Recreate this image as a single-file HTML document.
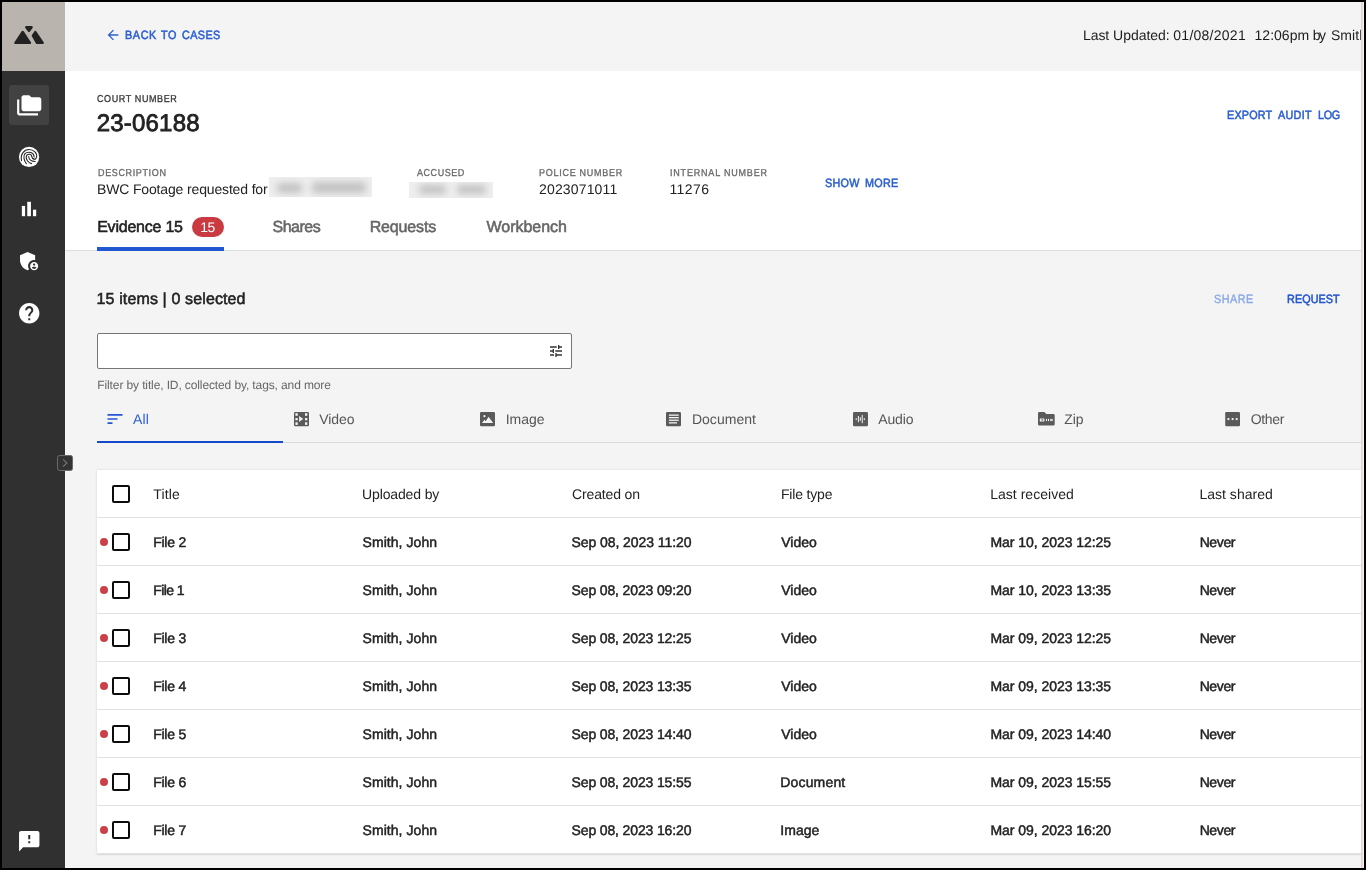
<!DOCTYPE html>
<html lang="en">
<head>
<meta charset="utf-8">
<title>Case 23-06188</title>
<style>
html,body{margin:0;padding:0;}
body{width:1366px;height:870px;overflow:hidden;background:#000;font-family:"Liberation Sans",sans-serif;position:relative;}
.abs{position:absolute;}
.t{position:absolute;white-space:pre;}
#txt{position:absolute;left:0;top:0;width:1366px;height:870px;will-change:transform;text-rendering:geometricPrecision;}
#frame{position:absolute;left:2px;top:2px;width:1362px;height:866px;overflow:hidden;background:#f4f4f4;}
/* everything inside #stage is positioned in page coordinates */
#stage{position:absolute;left:-2px;top:-2px;width:1366px;height:870px;}
#side{left:2px;top:2px;width:63px;height:866px;background:#303030;}
#logo{left:2px;top:2px;width:63px;height:69px;background:#b9b4ad;}
#topbar{left:65px;top:2px;width:1296px;height:69px;background:#f4f4f4;}
#head{left:65px;top:71px;width:1296px;height:179px;background:#fff;}
#headline{left:65px;top:250px;width:1296px;height:1px;background:#dcdedd;}
#navsel{left:9px;top:85px;width:40px;height:40px;border-radius:3px;background:#424242;}
#tabline{left:97px;top:247px;width:127px;height:4px;background:#2158d2;}
#badge{left:192px;top:217px;width:32px;height:20px;border-radius:10px;background:#c93a41;}
#search{left:97px;top:333px;width:473px;height:34px;border:1px solid #767676;border-radius:2px;background:#fff;}
#fline{left:97px;top:442px;width:1264px;height:1px;background:#d9d9d9;}
#fsel{left:97px;top:441px;width:186px;height:2px;background:#1449cc;}
#table{left:97px;top:470px;width:1264px;height:384px;background:#fff;box-shadow:0 0 3px rgba(0,0,0,.11),0 1px 1px rgba(0,0,0,.05);}
.rl{position:absolute;left:97px;width:1264px;height:1px;background:#e2e2e2;}
  .cb{position:absolute;left:112px;width:14px;height:14px;border:2px solid #0c0c0c;border-radius:2px;background:#fff;}
.dot{position:absolute;left:100px;width:8px;height:8px;border-radius:4px;background:#c94047;}
#strip{left:1361px;top:2px;width:3px;height:866px;background:linear-gradient(90deg,#e3d5d4 0,#e3d5d4 33%,#ecdcdb 33%,#ecdcdb 66%,#fdeeed 66%);}
#collapse{left:57px;top:455px;width:14px;height:14px;background:#333;border-radius:2.500px;border:1px solid #6a6a6a;}
.bbox{position:absolute;overflow:hidden;background:#eeeeee;}
.sm{position:absolute;background:#c2c2c2;filter:blur(3.5px);border-radius:4px;}
#upd{left:1083px;top:27px;font:400 14px/16px "Liberation Sans",sans-serif;color:#1a1a1a;white-space:pre;}
svg{position:absolute;overflow:visible;}
</style>
</head>
<body>
<div id="frame"><div id="stage">

<div class="abs" id="topbar"></div>
<div class="abs" id="head"></div>
<div class="abs" id="headline"></div>
<div class="abs" id="side"></div>
<div class="abs" id="logo"></div>
<div class="abs" id="navsel"></div>


<div class="abs" id="tabline"></div>
<div class="abs" id="badge"></div>

<div class="abs" id="search"></div>
<div class="abs" id="fline"></div>
<div class="abs" id="fsel"></div>

<div class="abs" id="table"></div>
<!-- logo -->
<svg style="left:0;top:0" width="70" height="72" viewBox="0 0 70 72">
 <g fill="#222" stroke="#222" stroke-width="2.5" stroke-linejoin="round">
  <path d="M26.34 27.15 L28.95 30.76 L31.56 27.15 Z"/>
  <path d="M15.50 42.85 L29.90 42.85 L22.70 31.96 Z"/>
  <path d="M35.35 32.11 L32.92 35.66 L37.03 42.85 L42.68 42.85 Z"/>
 </g>
</svg>
<!-- folder copy -->
<svg style="left:15.8px;top:92.73px" width="26.4" height="25.7" viewBox="0 0 24 24" preserveAspectRatio="none" fill="#fff">
 <path d="M3 6H1v13c0 1.100.9 2 2 2h17v-2H3V6z"/>
 <path d="M21 4h-7l-2-2H7c-1.100 0-1.990.9-1.990 2L5 15c0 1.100.9 2 2 2h14c1.100 0 2-.9 2-2V6c0-1.100-.9-2-2-2z"/>
</svg>
<!-- fingerprint circle -->
<svg style="left:17px;top:145px" width="24" height="24" viewBox="17 145 24 24">
 <circle cx="29.07" cy="156.95" r="10.15" fill="#fff"/>
 <g fill="none" stroke="#282828" stroke-width="1.12" stroke-linecap="round">
  <path d="M 21.55 160.59 C 20.03 154.10 24.45 149.55 28.86 149.55 C 33.83 149.55 37.55 153.28 36.53 157.41 C 36.03 159.21 34.38 159.76 33.50 158.66"/>
  <path d="M 26.38 163.76 C 23.90 160.45 22.93 156.03 25.00 153.69 C 26.52 151.90 31.34 151.34 33.28 154.10 C 33.97 155.21 34.10 156.03 34.10 156.92"/>
  <path d="M 31.62 163.62 C 28.03 162.66 25.88 159.34 26.24 156.72 C 26.52 154.79 28.03 154.30 29.14 154.30 C 30.79 154.30 31.76 155.48 31.90 156.86 C 32.03 158.24 33.00 159.12 34.24 159.21"/>
  <path d="M 28.72 156.59 C 28.72 159.34 31.34 161.55 35.21 161.55"/>
 </g>
</svg>
<!-- bar chart -->
<svg style="left:17px;top:197px" width="24" height="24" viewBox="17 197 24 24" fill="#fff">
 <rect x="21.85" y="205.9" width="3.25" height="10.3"/><rect x="27.25" y="201.8" width="3.7" height="14.4"/><rect x="32.95" y="209.7" width="3.25" height="6.5"/>
</svg>
<!-- admin panel settings -->
<svg style="left:16.8px;top:248.8px" width="24.2" height="24.2" viewBox="0 0 24 24" fill="#fff">
 <path d="M17 11c.34 0 .67.040 1 .090V6.270L10.500 3 3 6.270v4.910c0 4.540 3.200 8.790 7.500 9.820.55-.13 1.080-.32 1.600-.55-.69-.98-1.100-2.170-1.100-3.450 0-3.310 2.690-6 6-6z"/>
 <path d="M17 13c-2.210 0-4 1.790-4 4s1.790 4 4 4 4-1.790 4-4-1.790-4-4-4zm0 1.380c.62 0 1.120.51 1.120 1.120s-.51 1.120-1.120 1.120-1.120-.51-1.120-1.120.5-1.120 1.120-1.120zm0 5.370c-.93 0-1.740-.46-2.240-1.170.05-.72 1.510-1.080 2.240-1.080s2.190.36 2.240 1.080c-.5.710-1.310 1.170-2.240 1.170z"/>
</svg>
<!-- help -->
<svg style="left:16.86px;top:300.76px" width="24.48" height="24.48" viewBox="0 0 24 24" fill="#fff">
 <path d="M12 2C6.480 2 2 6.480 2 12s4.480 10 10 10 10-4.480 10-10S17.520 2 12 2zm1 17h-2v-2h2v2zm2.070-7.750l-.9.920C13.450 12.900 13 13.500 13 15h-2v-.5c0-1.100.45-2.100 1.170-2.830l1.240-1.260c.37-.36.590-.86.590-1.410 0-1.100-.9-2-2-2s-2 .9-2 2H8c0-2.210 1.790-4 4-4s4 1.790 4 4c0 .88-.36 1.680-.93 2.250z"/>
</svg>
<!-- feedback -->
<svg style="left:16.86px;top:828.66px" width="24.48" height="24.48" viewBox="0 0 24 24" fill="#fff">
 <path d="M20 2H4c-1.100 0-1.990.9-1.990 2L2 22l4-4h14c1.100 0 2-.9 2-2V4c0-1.100-.9-2-2-2zm-7 12h-2v-2h2v2zm0-4h-2V6h2v4z"/>
</svg>
<!-- back arrow -->
<svg style="left:105.1px;top:27px" width="16" height="16" viewBox="0 0 24 24" fill="#2b5fd0">
 <path d="M20 11H7.830l5.590-5.590L12 4l-8 8 8 8 1.410-1.410L7.830 13H20v-2z"/>
</svg>
<!-- tune -->
<svg style="left:548px;top:343px" width="16" height="16" viewBox="0 0 24 24" fill="#333">
 <path d="M3 17v2h6v-2H3zM3 5v2h10V5H3zm10 16v-2h8v-2h-8v-2h-2v6h2zM7 9v2H3v2h4v2h2V9H7zm14 4v-2H11v2h10zm-6-4h2V7h4V5h-4V3h-2v6z"/>
</svg>
<!-- filter: sort (All) -->
<svg style="left:105.4px;top:409px" width="20" height="20" viewBox="0 0 24 24" fill="#2457d3">
 <path d="M3 18h6v-2H3v2zM3 6v2h18V6H3zm0 7h12v-2H3v2z"/>
</svg>
<!-- filter: video -->
<svg style="left:290px;top:408px" width="24" height="24" viewBox="290 408 24 24">
 <rect x="294" y="412" width="15" height="14.2" rx="1.2" fill="#5a5a5a"/>
 <g fill="#f4f4f4">
  <rect x="295.4" y="413.2" width="2.3" height="2.6"/><rect x="295.4" y="418" width="2.3" height="2.3"/><rect x="295.4" y="422.3" width="2.3" height="2.6"/>
  <rect x="305" y="413.2" width="2.3" height="2.6"/><rect x="305" y="418" width="2.3" height="2.3"/><rect x="305" y="422.3" width="2.3" height="2.6"/>
  <path d="M299.1 416.1 L303.2 419.1 L299.1 422.1 Z"/>
 </g>
</svg>
<!-- filter: image -->
<svg style="left:476px;top:408px" width="24" height="24" viewBox="476 408 24 24">
 <rect x="480" y="412" width="15" height="14.200" rx="1.2" fill="#5a5a5a"/>
 <g fill="#f4f4f4">
  <circle cx="484.400" cy="416.200" r="1.1"/>
  <path d="M482 422.900 L484.400 419.800 L485.700 421.300 L488.600 416.800 L493.100 422.900 Z"/>
 </g>
</svg>
<!-- filter: document -->
<svg style="left:662px;top:408px" width="24" height="24" viewBox="662 408 24 24">
 <rect x="666" y="412" width="15" height="14.200" rx="1.2" fill="#5a5a5a"/>
 <g fill="#f4f4f4">
  <rect x="668.900" y="414.500" width="9.800" height="1.3"/><rect x="668.900" y="417" width="9.800" height="1.3"/>
  <rect x="668.900" y="419.600" width="9.800" height="1.300"/><rect x="668.900" y="422.200" width="8.100" height="1.3"/>
 </g>
</svg>
<!-- filter: audio -->
<svg style="left:849px;top:408px" width="24" height="24" viewBox="849 408 24 24">
 <rect x="853" y="412" width="15" height="14.200" rx="1.2" fill="#5a5a5a"/>
 <g fill="#e8e8e8">
  <rect x="855.700" y="418" width="1" height="2.200"/><rect x="857.900" y="416" width="1.100" height="6.200"/>
  <rect x="859.800" y="417.400" width="1.100" height="3.400"/><rect x="861.700" y="415" width="1.100" height="8.200"/>
  <rect x="863.800" y="418" width="1" height="2.200"/>
 </g>
</svg>
<!-- filter: zip -->
<svg style="left:1034px;top:408px" width="24" height="24" viewBox="1034 408 24 24">
 <path d="M1039.300 412 H1044.400 L1046.300 414 H1053.400 Q1054.700 414 1054.700 415.300 V424.300 Q1054.700 425.600 1053.400 425.600 H1039.300 Q1038 425.600 1038 424.300 V413.300 Q1038 412 1039.300 412 Z" fill="#5a5a5a"/>
 <g fill="#f4f4f4">
  <rect x="1039.800" y="418.500" width="4.600" height="3" rx="0.8"/>
  <rect x="1046" y="418.900" width="1" height="2.200"/><rect x="1048" y="418.900" width="1" height="2.200"/><rect x="1050" y="418.900" width="2.800" height="2.200" opacity=".8"/>
 </g>
 <rect x="1041.400" y="419.300" width="1.800" height="1.200" fill="#5a5a5a"/>
</svg>
<!-- filter: other -->
<svg style="left:1221px;top:408px" width="24" height="24" viewBox="1221 408 24 24">
 <rect x="1225.200" y="412" width="14.800" height="14.200" rx="1.200" fill="#5a5a5a"/>
 <g fill="#f4f4f4"><circle cx="1228.400" cy="419.100" r="1.150"/><circle cx="1232.600" cy="419.100" r="1.150"/><circle cx="1236.700" cy="419.100" r="1.150"/></g>
</svg>
<!-- collapse chevron drawn later (above sidebar) -->

<div class="cb" style="top:485px"></div>
<div class="rl" style="top:517px"></div>
<div class="rl" style="top:565px"></div>
<div class="rl" style="top:613px"></div>
<div class="rl" style="top:661px"></div>
<div class="rl" style="top:709px"></div>
<div class="rl" style="top:757px"></div>
<div class="rl" style="top:805px"></div>
<div class="rl" style="top:853px"></div>
<div class="dot" style="top:538px"></div>
<div class="cb" style="top:533px"></div>
<div class="dot" style="top:586px"></div>
<div class="cb" style="top:581px"></div>
<div class="dot" style="top:634px"></div>
<div class="cb" style="top:629px"></div>
<div class="dot" style="top:682px"></div>
<div class="cb" style="top:677px"></div>
<div class="dot" style="top:730px"></div>
<div class="cb" style="top:725px"></div>
<div class="dot" style="top:778px"></div>
<div class="cb" style="top:773px"></div>
<div class="dot" style="top:826px"></div>
<div class="cb" style="top:821px"></div>

<div class="bbox" style="left:269px;top:177px;width:103px;height:20px;">
 <div class="sm" style="left:8px;top:6px;width:25px;height:10px;"></div>
 <div class="sm" style="left:43px;top:5px;width:54px;height:11px;"></div>
</div>
<div class="bbox" style="left:409px;top:182px;width:84px;height:16px;">
 <div class="sm" style="left:10px;top:3px;width:27px;height:9px;"></div>
 <div class="sm" style="left:48px;top:3px;width:29px;height:9px;"></div>
</div>


<div id="txt">
<span class="t" style="left:125.45px;top:28.00px;font:400 12px/14px 'Liberation Sans', sans-serif;color:#2b5fd0;letter-spacing:0.703px;-webkit-text-stroke:0.55px #2b5fd0;transform:scaleX(0.9);transform-origin:0 0">BACK</span>
<span class="t" style="left:161.45px;top:28.00px;font:400 12px/14px 'Liberation Sans', sans-serif;color:#2b5fd0;letter-spacing:0.557px;-webkit-text-stroke:0.55px #2b5fd0;transform:scaleX(0.9);transform-origin:0 0">TO</span>
<span class="t" style="left:181.65px;top:28.00px;font:400 12px/14px 'Liberation Sans', sans-serif;color:#2b5fd0;letter-spacing:0.443px;-webkit-text-stroke:0.55px #2b5fd0;transform:scaleX(0.9);transform-origin:0 0">CASES</span>
<span class="t" style="left:1082.90px;top:27.00px;font:400 14px/16px 'Liberation Sans', sans-serif;color:#1c1c1c;letter-spacing:-0.032px">Last Updated:</span>
<span class="t" style="left:1173.30px;top:27.00px;font:400 14px/16px 'Liberation Sans', sans-serif;color:#1c1c1c;letter-spacing:0.258px">01/08/2021</span>
<span class="t" style="left:1254.50px;top:27.00px;font:400 14px/16px 'Liberation Sans', sans-serif;color:#1c1c1c;letter-spacing:0.030px">12:06pm</span>
<span class="t" style="left:1312.80px;top:27.00px;font:400 14px/16px 'Liberation Sans', sans-serif;color:#1c1c1c;letter-spacing:-1.486px">by</span>
<span class="t" style="left:1330.90px;top:27.00px;font:400 14px/16px 'Liberation Sans', sans-serif;color:#1c1c1c;letter-spacing:0.096px">Smith, John</span>
<span class="t" style="left:97.45px;top:94.00px;font:400 10px/11px 'Liberation Sans', sans-serif;color:#3a3a3a;letter-spacing:0.672px;-webkit-text-stroke:0.34px #3a3a3a;transform:scaleX(0.9);transform-origin:0 0">COURT NUMBER</span>
<span class="t" style="left:96.71px;top:110.00px;font:400 24px/27px 'Liberation Sans', sans-serif;color:#222;letter-spacing:0.201px;-webkit-text-stroke:0.82px #222">23-06188</span>
<span class="t" style="left:1227.05px;top:108.00px;font:400 12px/14px 'Liberation Sans', sans-serif;color:#2b5fd0;letter-spacing:0.220px;-webkit-text-stroke:0.55px #2b5fd0;transform:scaleX(0.9);transform-origin:0 0">EXPORT</span>
<span class="t" style="left:1278.25px;top:108.00px;font:400 12px/14px 'Liberation Sans', sans-serif;color:#2b5fd0;letter-spacing:0.333px;-webkit-text-stroke:0.55px #2b5fd0;transform:scaleX(0.9);transform-origin:0 0">AUDIT</span>
<span class="t" style="left:1318.05px;top:108.00px;font:400 12px/14px 'Liberation Sans', sans-serif;color:#2b5fd0;letter-spacing:-0.335px;-webkit-text-stroke:0.55px #2b5fd0;transform:scaleX(0.9);transform-origin:0 0">LOG</span>
<span class="t" style="left:97.55px;top:168.00px;font:400 10px/11px 'Liberation Sans', sans-serif;color:#6b6b6b;letter-spacing:0.710px;-webkit-text-stroke:0.34px #6b6b6b;transform:scaleX(0.9);transform-origin:0 0">DESCRIPTION</span>
<span class="t" style="left:97.00px;top:181.00px;font:400 14px/16px 'Liberation Sans', sans-serif;color:#222;letter-spacing:-0.152px">BWC Footage requested for</span>
<span class="t" style="left:417.15px;top:168.00px;font:400 10px/11px 'Liberation Sans', sans-serif;color:#6b6b6b;letter-spacing:0.609px;-webkit-text-stroke:0.34px #6b6b6b;transform:scaleX(0.9);transform-origin:0 0">ACCUSED</span>
<span class="t" style="left:539.15px;top:168.00px;font:400 10px/11px 'Liberation Sans', sans-serif;color:#6b6b6b;letter-spacing:0.804px;-webkit-text-stroke:0.34px #6b6b6b;transform:scaleX(0.9);transform-origin:0 0">POLICE NUMBER</span>
<span class="t" style="left:539.00px;top:181.00px;font:400 14px/16px 'Liberation Sans', sans-serif;color:#222;letter-spacing:0.152px">2023071011</span>
<span class="t" style="left:669.95px;top:168.00px;font:400 10px/11px 'Liberation Sans', sans-serif;color:#6b6b6b;letter-spacing:0.896px;-webkit-text-stroke:0.34px #6b6b6b;transform:scaleX(0.9);transform-origin:0 0">INTERNAL NUMBER</span>
<span class="t" style="left:669.40px;top:181.00px;font:400 14px/16px 'Liberation Sans', sans-serif;color:#222;letter-spacing:0.424px">11276</span>
<span class="t" style="left:824.75px;top:176.00px;font:400 12px/14px 'Liberation Sans', sans-serif;color:#2b5fd0;letter-spacing:0.296px;-webkit-text-stroke:0.55px #2b5fd0;transform:scaleX(0.9);transform-origin:0 0">SHOW</span>
<span class="t" style="left:865.25px;top:176.00px;font:400 12px/14px 'Liberation Sans', sans-serif;color:#2b5fd0;letter-spacing:0.336px;-webkit-text-stroke:0.55px #2b5fd0;transform:scaleX(0.9);transform-origin:0 0">MORE</span>
<span class="t" style="left:97.17px;top:219.00px;font:400 16px/17px 'Liberation Sans', sans-serif;color:#222;letter-spacing:-0.221px;-webkit-text-stroke:0.54px #222">Evidence 15</span>
<span class="t" style="left:200.20px;top:219.00px;font:400 14px/16px 'Liberation Sans', sans-serif;color:#fff;letter-spacing:-0.486px">15</span>
<span class="t" style="left:272.57px;top:219.00px;font:400 16px/17px 'Liberation Sans', sans-serif;color:#666;letter-spacing:-0.508px;-webkit-text-stroke:0.54px #666">Shares</span>
<span class="t" style="left:369.67px;top:219.00px;font:400 16px/17px 'Liberation Sans', sans-serif;color:#666;letter-spacing:-0.148px;-webkit-text-stroke:0.54px #666">Requests</span>
<span class="t" style="left:486.47px;top:219.00px;font:400 16px/17px 'Liberation Sans', sans-serif;color:#666;letter-spacing:-0.022px;-webkit-text-stroke:0.54px #666">Workbench</span>
<span class="t" style="left:96.57px;top:291.00px;font:400 16px/17px 'Liberation Sans', sans-serif;color:#222;letter-spacing:0.125px;-webkit-text-stroke:0.54px #222">15 items | 0 selected</span>
<span class="t" style="left:1213.98px;top:292.00px;font:400 12px/14px 'Liberation Sans', sans-serif;color:#8aa9e4;letter-spacing:0.563px;-webkit-text-stroke:0.41px #8aa9e4;transform:scaleX(0.9);transform-origin:0 0">SHARE</span>
<span class="t" style="left:1287.05px;top:292.00px;font:400 12px/14px 'Liberation Sans', sans-serif;color:#2255d0;letter-spacing:0.091px;-webkit-text-stroke:0.55px #2255d0;transform:scaleX(0.9);transform-origin:0 0">REQUEST</span>
<span class="t" style="left:97.30px;top:378.00px;font:400 12px/14px 'Liberation Sans', sans-serif;color:#666;letter-spacing:-0.117px">Filter by title, ID, collected by, tags, and more</span>
<span class="t" style="left:133.00px;top:411.00px;font:400 14px/16px 'Liberation Sans', sans-serif;color:#2b5fd0;letter-spacing:0.126px">All</span>
<span class="t" style="left:319.20px;top:411.00px;font:400 14px/16px 'Liberation Sans', sans-serif;color:#555;letter-spacing:-0.042px">Video</span>
<span class="t" style="left:505.70px;top:411.00px;font:400 14px/16px 'Liberation Sans', sans-serif;color:#555;letter-spacing:-0.031px">Image</span>
<span class="t" style="left:691.90px;top:411.00px;font:400 14px/16px 'Liberation Sans', sans-serif;color:#555;letter-spacing:0.040px">Document</span>
<span class="t" style="left:878.20px;top:411.00px;font:400 14px/16px 'Liberation Sans', sans-serif;color:#555;letter-spacing:-0.130px">Audio</span>
<span class="t" style="left:1064.20px;top:411.00px;font:400 14px/16px 'Liberation Sans', sans-serif;color:#555;letter-spacing:-0.031px">Zip</span>
<span class="t" style="left:1250.80px;top:411.00px;font:400 14px/16px 'Liberation Sans', sans-serif;color:#555;letter-spacing:-0.363px">Other</span>
<span class="t" style="left:153.30px;top:486.00px;font:400 14px/16px 'Liberation Sans', sans-serif;color:#222;letter-spacing:0.139px">Title</span>
<span class="t" style="left:362.10px;top:486.00px;font:400 14px/16px 'Liberation Sans', sans-serif;color:#222;letter-spacing:-0.141px">Uploaded by</span>
<span class="t" style="left:572.00px;top:486.00px;font:400 14px/16px 'Liberation Sans', sans-serif;color:#222;letter-spacing:-0.142px">Created on</span>
<span class="t" style="left:781.00px;top:486.00px;font:400 14px/16px 'Liberation Sans', sans-serif;color:#222;letter-spacing:-0.178px">File type</span>
<span class="t" style="left:990.20px;top:486.00px;font:400 14px/16px 'Liberation Sans', sans-serif;color:#222;letter-spacing:0.026px">Last received</span>
<span class="t" style="left:1199.40px;top:486.00px;font:400 14px/16px 'Liberation Sans', sans-serif;color:#222;letter-spacing:0.023px">Last shared</span>
<span class="t" style="left:153.14px;top:534.00px;font:400 14px/16px 'Liberation Sans', sans-serif;color:#222;letter-spacing:-0.225px;-webkit-text-stroke:0.48px #222">File 2</span>
<span class="t" style="left:362.54px;top:534.00px;font:400 14px/16px 'Liberation Sans', sans-serif;color:#222;letter-spacing:0.059px;-webkit-text-stroke:0.48px #222">Smith, John</span>
<span class="t" style="left:571.54px;top:534.00px;font:400 14px/16px 'Liberation Sans', sans-serif;color:#222;letter-spacing:-0.075px;-webkit-text-stroke:0.48px #222">Sep 08, 2023 11:20</span>
<span class="t" style="left:781.24px;top:534.00px;font:400 14px/16px 'Liberation Sans', sans-serif;color:#222;letter-spacing:-0.011px;-webkit-text-stroke:0.48px #222">Video</span>
<span class="t" style="left:990.44px;top:534.00px;font:400 14px/16px 'Liberation Sans', sans-serif;color:#222;letter-spacing:-0.042px;-webkit-text-stroke:0.48px #222">Mar 10, 2023 12:25</span>
<span class="t" style="left:1199.64px;top:534.00px;font:400 14px/16px 'Liberation Sans', sans-serif;color:#222;letter-spacing:-0.365px;-webkit-text-stroke:0.48px #222">Never</span>
<span class="t" style="left:153.14px;top:582.00px;font:400 14px/16px 'Liberation Sans', sans-serif;color:#222;letter-spacing:-0.545px;-webkit-text-stroke:0.48px #222">File 1</span>
<span class="t" style="left:362.54px;top:582.00px;font:400 14px/16px 'Liberation Sans', sans-serif;color:#222;letter-spacing:0.059px;-webkit-text-stroke:0.48px #222">Smith, John</span>
<span class="t" style="left:571.54px;top:582.00px;font:400 14px/16px 'Liberation Sans', sans-serif;color:#222;letter-spacing:-0.136px;-webkit-text-stroke:0.48px #222">Sep 08, 2023 09:20</span>
<span class="t" style="left:781.24px;top:582.00px;font:400 14px/16px 'Liberation Sans', sans-serif;color:#222;letter-spacing:-0.011px;-webkit-text-stroke:0.48px #222">Video</span>
<span class="t" style="left:990.44px;top:582.00px;font:400 14px/16px 'Liberation Sans', sans-serif;color:#222;letter-spacing:-0.042px;-webkit-text-stroke:0.48px #222">Mar 10, 2023 13:35</span>
<span class="t" style="left:1199.64px;top:582.00px;font:400 14px/16px 'Liberation Sans', sans-serif;color:#222;letter-spacing:-0.365px;-webkit-text-stroke:0.48px #222">Never</span>
<span class="t" style="left:153.14px;top:630.00px;font:400 14px/16px 'Liberation Sans', sans-serif;color:#222;letter-spacing:-0.225px;-webkit-text-stroke:0.48px #222">File 3</span>
<span class="t" style="left:362.54px;top:630.00px;font:400 14px/16px 'Liberation Sans', sans-serif;color:#222;letter-spacing:0.059px;-webkit-text-stroke:0.48px #222">Smith, John</span>
<span class="t" style="left:571.54px;top:630.00px;font:400 14px/16px 'Liberation Sans', sans-serif;color:#222;letter-spacing:-0.136px;-webkit-text-stroke:0.48px #222">Sep 08, 2023 12:25</span>
<span class="t" style="left:781.24px;top:630.00px;font:400 14px/16px 'Liberation Sans', sans-serif;color:#222;letter-spacing:-0.011px;-webkit-text-stroke:0.48px #222">Video</span>
<span class="t" style="left:990.44px;top:630.00px;font:400 14px/16px 'Liberation Sans', sans-serif;color:#222;letter-spacing:-0.042px;-webkit-text-stroke:0.48px #222">Mar 09, 2023 12:25</span>
<span class="t" style="left:1199.64px;top:630.00px;font:400 14px/16px 'Liberation Sans', sans-serif;color:#222;letter-spacing:-0.365px;-webkit-text-stroke:0.48px #222">Never</span>
<span class="t" style="left:153.14px;top:678.00px;font:400 14px/16px 'Liberation Sans', sans-serif;color:#222;letter-spacing:-0.225px;-webkit-text-stroke:0.48px #222">File 4</span>
<span class="t" style="left:362.54px;top:678.00px;font:400 14px/16px 'Liberation Sans', sans-serif;color:#222;letter-spacing:0.059px;-webkit-text-stroke:0.48px #222">Smith, John</span>
<span class="t" style="left:571.54px;top:678.00px;font:400 14px/16px 'Liberation Sans', sans-serif;color:#222;letter-spacing:-0.136px;-webkit-text-stroke:0.48px #222">Sep 08, 2023 13:35</span>
<span class="t" style="left:781.24px;top:678.00px;font:400 14px/16px 'Liberation Sans', sans-serif;color:#222;letter-spacing:-0.011px;-webkit-text-stroke:0.48px #222">Video</span>
<span class="t" style="left:990.44px;top:678.00px;font:400 14px/16px 'Liberation Sans', sans-serif;color:#222;letter-spacing:-0.042px;-webkit-text-stroke:0.48px #222">Mar 09, 2023 13:35</span>
<span class="t" style="left:1199.64px;top:678.00px;font:400 14px/16px 'Liberation Sans', sans-serif;color:#222;letter-spacing:-0.365px;-webkit-text-stroke:0.48px #222">Never</span>
<span class="t" style="left:153.14px;top:726.00px;font:400 14px/16px 'Liberation Sans', sans-serif;color:#222;letter-spacing:-0.225px;-webkit-text-stroke:0.48px #222">File 5</span>
<span class="t" style="left:362.54px;top:726.00px;font:400 14px/16px 'Liberation Sans', sans-serif;color:#222;letter-spacing:0.059px;-webkit-text-stroke:0.48px #222">Smith, John</span>
<span class="t" style="left:571.54px;top:726.00px;font:400 14px/16px 'Liberation Sans', sans-serif;color:#222;letter-spacing:-0.136px;-webkit-text-stroke:0.48px #222">Sep 08, 2023 14:40</span>
<span class="t" style="left:781.24px;top:726.00px;font:400 14px/16px 'Liberation Sans', sans-serif;color:#222;letter-spacing:-0.011px;-webkit-text-stroke:0.48px #222">Video</span>
<span class="t" style="left:990.44px;top:726.00px;font:400 14px/16px 'Liberation Sans', sans-serif;color:#222;letter-spacing:-0.042px;-webkit-text-stroke:0.48px #222">Mar 09, 2023 14:40</span>
<span class="t" style="left:1199.64px;top:726.00px;font:400 14px/16px 'Liberation Sans', sans-serif;color:#222;letter-spacing:-0.365px;-webkit-text-stroke:0.48px #222">Never</span>
<span class="t" style="left:153.14px;top:774.00px;font:400 14px/16px 'Liberation Sans', sans-serif;color:#222;letter-spacing:-0.225px;-webkit-text-stroke:0.48px #222">File 6</span>
<span class="t" style="left:362.54px;top:774.00px;font:400 14px/16px 'Liberation Sans', sans-serif;color:#222;letter-spacing:0.059px;-webkit-text-stroke:0.48px #222">Smith, John</span>
<span class="t" style="left:571.54px;top:774.00px;font:400 14px/16px 'Liberation Sans', sans-serif;color:#222;letter-spacing:-0.136px;-webkit-text-stroke:0.48px #222">Sep 08, 2023 15:55</span>
<span class="t" style="left:780.24px;top:774.00px;font:400 14px/16px 'Liberation Sans', sans-serif;color:#222;letter-spacing:0.172px;-webkit-text-stroke:0.48px #222">Document</span>
<span class="t" style="left:990.44px;top:774.00px;font:400 14px/16px 'Liberation Sans', sans-serif;color:#222;letter-spacing:-0.042px;-webkit-text-stroke:0.48px #222">Mar 09, 2023 15:55</span>
<span class="t" style="left:1199.64px;top:774.00px;font:400 14px/16px 'Liberation Sans', sans-serif;color:#222;letter-spacing:-0.365px;-webkit-text-stroke:0.48px #222">Never</span>
<span class="t" style="left:153.14px;top:822.00px;font:400 14px/16px 'Liberation Sans', sans-serif;color:#222;letter-spacing:-0.225px;-webkit-text-stroke:0.48px #222">File 7</span>
<span class="t" style="left:362.54px;top:822.00px;font:400 14px/16px 'Liberation Sans', sans-serif;color:#222;letter-spacing:0.059px;-webkit-text-stroke:0.48px #222">Smith, John</span>
<span class="t" style="left:571.54px;top:822.00px;font:400 14px/16px 'Liberation Sans', sans-serif;color:#222;letter-spacing:-0.136px;-webkit-text-stroke:0.48px #222">Sep 08, 2023 16:20</span>
<span class="t" style="left:780.24px;top:822.00px;font:400 14px/16px 'Liberation Sans', sans-serif;color:#222;letter-spacing:0.050px;-webkit-text-stroke:0.48px #222">Image</span>
<span class="t" style="left:990.44px;top:822.00px;font:400 14px/16px 'Liberation Sans', sans-serif;color:#222;letter-spacing:-0.042px;-webkit-text-stroke:0.48px #222">Mar 09, 2023 16:20</span>
<span class="t" style="left:1199.64px;top:822.00px;font:400 14px/16px 'Liberation Sans', sans-serif;color:#222;letter-spacing:-0.365px;-webkit-text-stroke:0.48px #222">Never</span>
</div>

<div class="abs" id="collapse"></div>
<svg style="left:57px;top:455px" width="16" height="16" viewBox="57 455 16 16"><path d="M63.100 459.400 L66.900 463 L63.100 466.600" fill="none" stroke="#757575" stroke-width="1.100"/></svg>
<div class="abs" id="strip"></div>
</div></div>
</body>
</html>
